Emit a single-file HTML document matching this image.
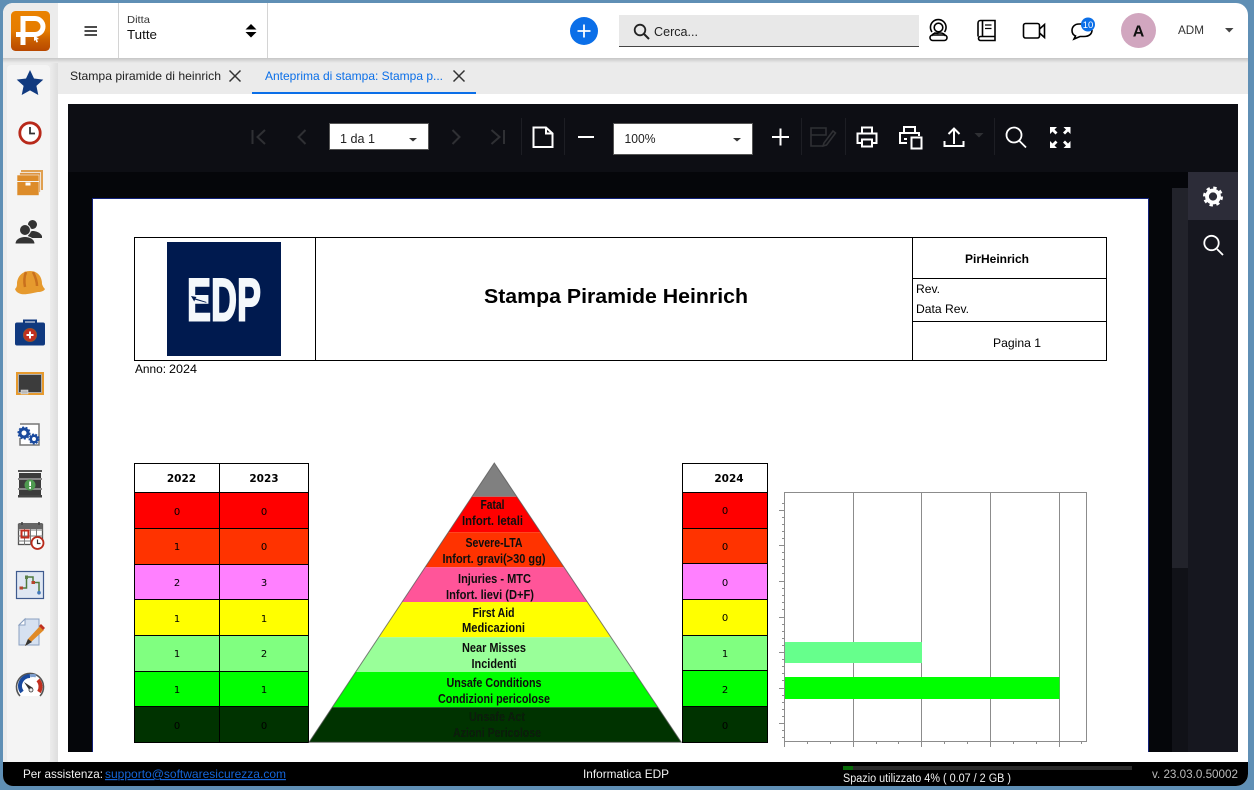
<!DOCTYPE html>
<html lang="it"><head><meta charset="utf-8"><title>Anteprima di stampa</title>
<style>
html,body{margin:0;padding:0;width:1254px;height:790px;overflow:hidden;background:#5f8fb5}
svg{display:block}
text{font-family:"Liberation Sans",sans-serif}
.dj{font-family:"DejaVu Sans",sans-serif}
.pt{font-family:"Liberation Sans",sans-serif;font-weight:700;font-size:12.500px;filter:url(#soft)}
</style></head><body>
<svg width="1254" height="790" viewBox="0 0 1254 790" xmlns="http://www.w3.org/2000/svg">
<defs>
<linearGradient id="lg" x1="0" y1="0" x2="0" y2="1"><stop offset="0" stop-color="#ea8200"/><stop offset=".5" stop-color="#e57c00"/><stop offset=".7" stop-color="#cc6200"/><stop offset="1" stop-color="#b84800"/></linearGradient>
<linearGradient id="sh" x1="0" y1="0" x2="0" y2="1"><stop offset="0" stop-color="#000" stop-opacity=".16"/><stop offset="1" stop-color="#000" stop-opacity="0"/></linearGradient>
<linearGradient id="gut" x1="0" y1="0" x2="1" y2="0"><stop offset="0" stop-color="#ececec"/><stop offset="1" stop-color="#dedede"/></linearGradient>
<filter id="soft"><feGaussianBlur stdDeviation=".28"/></filter>
<clipPath id="win"><path d="M13 3H1236a12 12 0 0 1 12 12V774a12 12 0 0 1-12 12H13a10 10 0 0 1-10-10V13a10 10 0 0 1 10-10z"/></clipPath>
</defs>
<rect width="1254" height="790" fill="#5f8fb5"/>
<g clip-path="url(#win)">
<rect x="3" y="3" width="1245" height="783" fill="#fff"/>
<!-- left column -->
<rect x="3" y="3" width="55" height="760" fill="#ececec"/>
<rect x="50" y="63" width="8" height="700" fill="url(#gut)"/>
<rect x="7" y="65" width="43" height="698" rx="4" fill="#f4f4f4"/>
<rect x="3" y="58" width="55" height="5" fill="url(#sh)"/>
<!-- logo -->
<rect x="11" y="11" width="39" height="40" rx="4.500" fill="url(#lg)"/>
<path d="M23 45V18.500H35a8 8 0 0 1 0 16H16" fill="none" stroke="#fff" stroke-width="5"/>
<path d="M34 35l5 4-2 .5 1 2.500-1.500.5-1-2.500-1.500 1z" fill="#fff"/>
<!-- top bar -->
<path d="M84.500 27h12.500M84.500 31h12.500M84.500 35h12.500" stroke="#111" stroke-width="1.600"/>
<rect x="118" y="3" width="1" height="55" fill="#d4d4d4"/><rect x="267" y="3" width="1" height="55" fill="#d4d4d4"/>
<text x="127" y="23" font-size="10.500" fill="#333" textLength="23" lengthAdjust="spacingAndGlyphs">Ditta</text>
<text x="127" y="39" font-size="12.500" fill="#111" textLength="30" lengthAdjust="spacingAndGlyphs">Tutte</text>
<path d="M251 24l-5.500 5.500h11zM251 37.500l-5.500-5.500h11z" fill="#000"/>
<circle cx="584" cy="31" r="14" fill="#0b6fe8"/><path d="M577.500 31h13M584 24.500v13" stroke="#fff" stroke-width="1.800"/>
<rect x="619" y="15" width="300" height="32" fill="#e8e8e8"/><rect x="619" y="46" width="300" height="1" fill="#444"/>
<circle cx="640" cy="30" r="5.300" fill="none" stroke="#222" stroke-width="1.800"/><path d="M644 34l5 5" stroke="#222" stroke-width="2"/>
<text x="654" y="36" font-size="12.500" fill="#222" textLength="44" lengthAdjust="spacingAndGlyphs">Cerca...</text>
<!-- support -->
<g fill="none" stroke="#000" stroke-width="1.600">
<path d="M932 32a7.800 7.800 0 1 1 12.500 0"/><circle cx="938.500" cy="27.500" r="4.300"/><path d="M934 33l4.500.5"/><rect x="930" y="35" width="17" height="5.500" rx="2.700"/>
<path d="M931.500 36c1-2 3-3 5-3h4c2 0 4 1 5 3"/>
<!-- book -->
<path d="M978 36.500V23a2.500 2.500 0 0 1 2.500-2.500H995V36.500H980.500a2 2 0 0 0 0 4H995V36.500M982.500 20.500V36.500"/><path d="M985 25h6.500M985 28.500h6.500" stroke-width="1.300"/>
<!-- video -->
<rect x="1023.500" y="23.500" width="16" height="14.500" rx="2"/><path d="M1039.500 29l5-4.500v13l-5-4.500"/>
<!-- chat -->
<path d="M1083 24h-4c-4.500 0-7 3-7 6.500 0 2.500 1.300 4.500 3.500 5.500l-1.500 3 6-2.500h4c5 0 8-2.500 8-6.500"/>
</g>
<circle cx="1088" cy="24.500" r="7" fill="#0b6fe8"/><text x="1088" y="28" font-size="9.500" fill="#fff" text-anchor="middle">10</text>
<circle cx="1138.500" cy="30.500" r="17.500" fill="#d1a6bf"/><text x="1138.500" y="36.500" font-size="16" font-weight="700" fill="#111" text-anchor="middle">A</text>
<text x="1178" y="34" font-size="12" fill="#333" textLength="26" lengthAdjust="spacingAndGlyphs">ADM</text>
<path d="M1225 28h8.500l-4.250 4.500z" fill="#444"/>
<!-- tabs -->
<rect x="58" y="58" width="1190" height="36" fill="#ebebeb"/>
<rect x="58" y="58" width="1190" height="5" fill="url(#sh)"/>
<text x="70" y="80" font-size="12" fill="#222" textLength="151" lengthAdjust="spacingAndGlyphs">Stampa piramide di heinrich</text>
<path d="M229.500 70.500l11 11M240.500 70.500l-11 11" stroke="#333" stroke-width="1.500"/>
<text x="265" y="80" font-size="12" fill="#0b6fe8" textLength="178" lengthAdjust="spacingAndGlyphs">Anteprima di stampa: Stampa p...</text>
<path d="M453.500 70.500l11 11M464.500 70.500l-11 11" stroke="#333" stroke-width="1.500"/>
<rect x="252" y="92" width="224" height="2" fill="#0b6fe8"/>
<!-- viewer -->
<rect x="68" y="104" width="1170" height="648" fill="#05060a"/>
<rect x="68" y="104" width="1170" height="68" fill="#0d0e14"/>
<!-- right panel -->
<rect x="1172" y="188" width="16" height="564" fill="#111218"/>
<rect x="1172" y="188" width="16" height="380" fill="#22232b"/>
<rect x="1188" y="172" width="50" height="580" fill="#16171f"/>
<rect x="1188" y="172" width="50" height="48" fill="#2c2c38"/>
<g fill="none" stroke="#2f3034" stroke-width="2">
<path d="M252.500 130v14M265 130l-7.500 7 7.500 7M305.500 130l-7 7 7 7M452.500 130l7 7-7 7M491.500 130l8 7-8 7M504 130v14"/>
<path d="M811 128h15v7h-15zM811 140v6h13M811 135v5M824 143l9-12 2.500 2-9 12-3.500 1z" stroke-width="1.600"/>
</g>
<path d="M974.500 133h9l-4.500 4.500z" fill="#2f3034"/>
<g fill="#1d1e24"><rect x="521" y="118" width="1" height="37"/><rect x="564" y="118" width="1" height="37"/><rect x="801" y="118" width="1" height="37"/><rect x="845" y="118" width="1" height="37"/><rect x="994" y="118" width="1" height="37"/></g>
<rect x="329.500" y="123.500" width="99" height="26" fill="#fff" stroke="#555"/>
<text x="340" y="143" font-size="12.500" fill="#222" textLength="35" lengthAdjust="spacingAndGlyphs">1 da 1</text>
<path d="M409 138h8l-4 3.500z" fill="#333"/>
<rect x="613.500" y="123.500" width="139" height="31" fill="#fff" stroke="#555"/>
<text x="624.500" y="143" font-size="12.500" fill="#222" textLength="31" lengthAdjust="spacingAndGlyphs">100%</text>
<path d="M733 138h8l-4 3.500z" fill="#333"/>
<g fill="none" stroke="#fff" stroke-width="2">
<path d="M533.500 127.500h12.500l6.500 6v13.500h-19zM546 127.500v6h6.500"/>
<path d="M578 137h16"/>
<path d="M772 137h17M780.500 128.500v17"/>
<!-- print -->
<path d="M862 134v-6.500h10v6.500M862 143h-4.500v-9.500h19v9.500H872M862 139.500h10v7h-10z"/>
<!-- print 2 -->
<path d="M904 133v-6h11v6M907 143h-7v-10h19v3M907 139h-3"/><rect x="911.500" y="137.500" width="10" height="11"/>
<!-- upload -->
<path d="M954 144v-15M948.500 134l5.500-5.500 5.500 5.500M944.500 141v5h19v-5"/>
</g>
<g fill="none" stroke="#fff" stroke-width="1.800">
<!-- search -->
<circle cx="1014" cy="135" r="7.500"/><path d="M1019.500 141l6.500 6.500"/>
<!-- right search -->
<circle cx="1211.500" cy="243" r="7.200"/><path d="M1217 249l6 6"/>
</g>
<!-- fullscreen -->
<g fill="#fff">
<path d="M1050 127h7l-2.500 2.500 3 3-2 2-3-3-2.500 2.500zM1070.500 127v7l-2.500-2.500-3 3-2-2 3-3-2.500-2.500zM1050 148v-7l2.500 2.500 3-3 2 2-3 3 2.500 2.500zM1070.500 148h-7l2.500-2.500-3-3 2-2 3 3 2.500-2.500z"/>
</g>
<!-- gear -->
<circle cx="1213" cy="196.500" r="6" fill="none" stroke="#fff" stroke-width="3.800"/>
<circle cx="1213" cy="196.500" r="8.800" fill="none" stroke="#fff" stroke-width="2.400" stroke-dasharray="3.400 3.510"/>
<!-- page -->
<rect x="92" y="198" width="1057" height="554" fill="#fff"/>
<path d="M92.500 752V198.500H1148.500V752" fill="none" stroke="#12217a"/>
<!-- header table -->
<g fill="none" stroke="#000">
<rect x="134.500" y="237.500" width="972" height="123"/>
<path d="M315.500 237v124M912.500 237v124M912.500 278.500h194M912.500 321.500h194"/>
</g>
<rect x="167" y="242" width="114" height="114" fill="#001a4f"/>
<text x="187" y="320.500" font-size="60" font-weight="700" fill="#f4f8fb" stroke="#f4f8fb" stroke-width="2" textLength="74" lengthAdjust="spacingAndGlyphs">EDP</text>
<path d="M191 296l5.500 1-1 1.500 11 3.500-.3.800-11.200-3.200-.8 1.900z" fill="#001a4f"/>
<text x="484" y="303" font-size="20" font-weight="700" fill="#000" textLength="264" lengthAdjust="spacingAndGlyphs">Stampa Piramide Heinrich</text>
<text x="965" y="263" font-size="12" font-weight="700" fill="#000" textLength="64" lengthAdjust="spacingAndGlyphs">PirHeinrich</text>
<text x="916" y="293" font-size="12" fill="#000" textLength="24" lengthAdjust="spacingAndGlyphs">Rev.</text>
<text x="916" y="313" font-size="12" fill="#000" textLength="53" lengthAdjust="spacingAndGlyphs">Data Rev.</text>
<text x="993" y="347" font-size="12" fill="#000" textLength="48" lengthAdjust="spacingAndGlyphs">Pagina 1</text>
<text x="135" y="373" font-size="12" fill="#000" textLength="31" lengthAdjust="spacingAndGlyphs">Anno:</text>
<text x="169" y="373" font-size="12" fill="#000" textLength="28" lengthAdjust="spacingAndGlyphs">2024</text>
<!-- left table -->
<g>
<rect x="134" y="492" width="175" height="36" fill="#f00"/>
<rect x="134" y="528" width="175" height="36" fill="#f30"/>
<rect x="134" y="564" width="175" height="35" fill="#ff80ff"/>
<rect x="134" y="599" width="175" height="36" fill="#ff0"/>
<rect x="134" y="635" width="175" height="36" fill="#80ff80"/>
<rect x="134" y="671" width="175" height="35" fill="#0f0"/>
<rect x="134" y="706" width="175" height="36" fill="#030"/>
<path d="M134.500 463.500H308.500V742.500H134.500zM219.500 463v280M134 492.500h175M134 528.500h175M134 564.500h175M134 599.500h175M134 635.500h175M134 671.500h175M134 706.500h175" fill="none" stroke="#000"/>
</g>
<g class="dj" font-size="10" fill="#000" text-anchor="middle">
<text x="181.500" y="482" font-weight="700" class="dj" font-size="10.500">2022</text><text x="264" y="482" font-weight="700" class="dj" font-size="10.500">2023</text>
<text x="177" y="515" class="dj">0</text><text x="264" y="515" class="dj">0</text>
<text x="177" y="550" class="dj">1</text><text x="264" y="550" class="dj">0</text>
<text x="177" y="586" class="dj">2</text><text x="264" y="586" class="dj">3</text>
<text x="177" y="622" class="dj">1</text><text x="264" y="622" class="dj">1</text>
<text x="177" y="657" class="dj">1</text><text x="264" y="657" class="dj">2</text>
<text x="177" y="693" class="dj">1</text><text x="264" y="693" class="dj">1</text>
<text x="177" y="729" class="dj">0</text><text x="264" y="729" class="dj">0</text>
</g>
<!-- pyramid -->
<path d="M494.300 463L516.900 496.700H471.900z" fill="#808080"/>
<path d="M471.900 496.700H516.900L540.700 532.300H448.300z" fill="#f00"/>
<path d="M448.300 532.300H540.700L564.100 567.300H425.100z" fill="#f30"/>
<path d="M425.100 567.300H564.100L587.400 602H402.100z" fill="#ff5599"/>
<path d="M402.100 602H587.400L611 637.300H378.700z" fill="#ff0"/>
<path d="M378.700 637.300H611L634.200 672H355.600z" fill="#99ff99"/>
<path d="M355.600 672H634.200L657.900 707.300H332.200z" fill="#0f0"/>
<path d="M332.200 707.300H657.900L681.300 742.300H309z" fill="#030"/>
<path d="M309 742.300L494.300 463 681.300 742.300z" fill="none" stroke="#555" stroke-width="1" opacity=".75"/>
<g fill="#111" text-anchor="middle">
<text class="pt" x="492.500" y="509" textLength="24" lengthAdjust="spacingAndGlyphs">Fatal</text>
<text class="pt" x="492.500" y="525" textLength="61" lengthAdjust="spacingAndGlyphs">Infort. letali</text>
<text class="pt" x="494" y="547" textLength="57" lengthAdjust="spacingAndGlyphs">Severe-LTA</text>
<text class="pt" x="494" y="563" textLength="103" lengthAdjust="spacingAndGlyphs">Infort. gravi(&gt;30 gg)</text>
<text class="pt" x="494.500" y="583" textLength="73" lengthAdjust="spacingAndGlyphs">Injuries - MTC</text>
<text class="pt" x="490" y="599" textLength="88" lengthAdjust="spacingAndGlyphs">Infort. lievi (D+F)</text>
<text class="pt" x="493.500" y="617" textLength="42" lengthAdjust="spacingAndGlyphs">First Aid</text>
<text class="pt" x="493.500" y="632" textLength="63" lengthAdjust="spacingAndGlyphs">Medicazioni</text>
<text class="pt" x="494" y="652" textLength="64" lengthAdjust="spacingAndGlyphs">Near Misses</text>
<text class="pt" x="494" y="668" textLength="45" lengthAdjust="spacingAndGlyphs">Incidenti</text>
<text class="pt" x="494" y="687" textLength="95" lengthAdjust="spacingAndGlyphs">Unsafe Conditions</text>
<text class="pt" x="494" y="703" textLength="112" lengthAdjust="spacingAndGlyphs">Condizioni pericolose</text>
<text class="pt" x="497" y="721" textLength="56" lengthAdjust="spacingAndGlyphs" fill="#0a1a0a">Unsafe Act</text>
<text class="pt" x="497" y="737" textLength="88" lengthAdjust="spacingAndGlyphs" fill="#0a1a0a">Azioni Pericolose</text>
</g>
<!-- right table -->
<rect x="682" y="492" width="86" height="36" fill="#f00"/>
<rect x="682" y="528" width="86" height="36" fill="#f30"/>
<rect x="682" y="564" width="86" height="35" fill="#ff80ff"/>
<rect x="682" y="599" width="86" height="36" fill="#ff0"/>
<rect x="682" y="635" width="86" height="35" fill="#80ff80"/>
<rect x="682" y="670" width="86" height="36" fill="#0f0"/>
<rect x="682" y="706" width="86" height="36" fill="#030"/>
<path d="M682.500 463.500H767.500V742.500H682.500zM682 492.500h86M682 528.500h86M682 563.500h86M682 599.500h86M682 635.500h86M682 670.500h86M682 706.500h86" fill="none" stroke="#000"/>
<g font-size="10" fill="#000" text-anchor="middle">
<text x="729" y="482" font-weight="700" class="dj" font-size="10.500">2024</text>
<text x="725" y="514" class="dj">0</text><text x="725" y="550" class="dj">0</text><text x="725" y="586" class="dj">0</text><text x="725" y="621" class="dj">0</text><text x="725" y="657" class="dj">1</text><text x="725" y="693" class="dj">2</text><text x="725" y="729" class="dj">0</text>
</g>
<!-- chart -->
<g fill="none" stroke="#8c8c8c">
<rect x="784.500" y="492.500" width="302" height="249"/>
<path d="M853.500 492v250M921.500 492v250M990.500 492v250M1059.500 492v250"/>
<path d="M779 510.500h6M779 545.500h6M779 581.500h6M779 617.500h6M779 652.500h6M779 688.500h6M779 723.500h6"/>
<path d="M782 503.500h3M782 517.500h3M782 524.500h3M782 531.500h3M782 538.500h3M782 552.500h3M782 559.500h3M782 566.500h3M782 573.500h3M782 588.500h3M782 595.500h3M782 602.500h3M782 609.500h3M782 624.500h3M782 631.500h3M782 638.500h3M782 645.500h3M782 659.500h3M782 666.500h3M782 673.500h3M782 680.500h3M782 695.500h3M782 702.500h3M782 709.500h3M782 716.500h3M782 730.500h3M782 737.500h3"/>
<path d="M784.500 741v6M853.500 741v6M921.500 741v6M990.500 741v6M1059.500 741v6"/>
<path d="M807.500 741v3M830.500 741v3M876.500 741v3M898.500 741v3M944.500 741v3M967.500 741v3M1013.500 741v3M1036.500 741v3M1081.500 741v3"/>
</g>
<rect x="785" y="642" width="137" height="21" fill="#66ff8c"/>
<rect x="785" y="677" width="274.500" height="22" fill="#0f0"/>
<!-- side icons -->
<path d="M30 70l4 8.500 9.300 1.100-6.900 6.300 1.900 9.100-8.300-4.600-8.300 4.600 1.900-9.100-6.900-6.300 9.300-1.100z" fill="#10397f"/>
<circle cx="30" cy="133" r="10.200" fill="#fff" stroke="#b8291a" stroke-width="2.800"/><path d="M30 127v6.500h5" fill="none" stroke="#333" stroke-width="1.800"/>
<!-- boxes -->
<rect x="21" y="170" width="22" height="20" fill="#e0a050"/><rect x="19.500" y="172.500" width="21" height="20" fill="#dd9440" stroke="#f4f4f4" stroke-width=".8"/>
<rect x="17" y="175" width="22" height="20.500" fill="#dd8c2a" stroke="#f4f4f4" stroke-width=".6"/><rect x="17" y="181" width="22" height="1" fill="#f4f4f4"/><rect x="25.500" y="182.500" width="5" height="3" fill="#fff"/>
<!-- people -->
<g fill="#333"><circle cx="32.500" cy="224.500" r="4.500"/><path d="M28 236c1-4 3-5 5-5s7 1 9 5v2H30z"/><circle cx="25" cy="230" r="5.500" stroke="#f4f4f4"/><path d="M15 244c0-5 5-7.500 10-7.500s10 2.500 10 7.500z" stroke="#f4f4f4"/></g>
<!-- helmet -->
<path d="M15 289c1-1 2-2 2-5 0-7 5-13 13-13s12 6 12 13c1 3 2 4 3 5-1 2-4 3-7 3-6 1-12 3-17 2-3-1-5-2-6-5z" fill="#e69a2e"/>
<path d="M26 272c-2 5-2 10-1 15M33 272c2 4 4 9 4 14" stroke="#c9701d" stroke-width="2.500" fill="none"/>
<!-- medkit -->
<path d="M24 323v-2.500h12v2.500" fill="none" stroke="#10397f" stroke-width="2"/><rect x="15" y="322.500" width="30" height="23" rx="2" fill="#10397f"/><circle cx="30" cy="335" r="6.500" fill="#c22f1f" stroke="#92502a"/><path d="M30 331.500v7M26.500 335h7" stroke="#fff" stroke-width="2"/>
<!-- board -->
<rect x="17" y="373" width="26" height="21" fill="#3c3c3c" stroke="#e69a2e" stroke-width="2"/><rect x="18.500" y="374.500" width="23" height="18" fill="none" stroke="#ddd" stroke-width=".7"/><rect x="21" y="390" width="7" height="4" fill="#bbb" stroke="#eee" stroke-width=".5"/>
<!-- gears -->
<path d="M20 424h19v21H20v-7" fill="#fff" stroke="#777" stroke-width="1.500"/>
<circle cx="24" cy="433" r="4" fill="none" stroke="#1a4a9e" stroke-width="3"/><circle cx="24" cy="433" r="5.800" fill="none" stroke="#1a4a9e" stroke-width="1.500" stroke-dasharray="2 1.600"/>
<circle cx="34" cy="439" r="3.200" fill="none" stroke="#1a4a9e" stroke-width="2.500"/><circle cx="34" cy="439" r="4.800" fill="none" stroke="#1a4a9e" stroke-width="1.300" stroke-dasharray="2 1.400"/>
<!-- barrel -->
<path d="M19 472l3-2h4v2z" fill="#333"/><rect x="19" y="473" width="22" height="22" fill="#3c3c3c"/><rect x="18" y="470" width="24" height="2" fill="#555"/><rect x="18" y="478" width="24" height="2" fill="#888"/><rect x="18" y="488" width="24" height="2" fill="#888"/><rect x="18" y="495" width="24" height="2.500" fill="#444"/>
<circle cx="30" cy="485" r="5.500" fill="#4f9a50"/><rect x="29.200" y="481.500" width="1.800" height="4.500" fill="#fff"/><rect x="29.200" y="487" width="1.800" height="1.800" fill="#fff"/>
<!-- calendar -->
<rect x="18.500" y="524.500" width="24" height="20" fill="#fff" stroke="#555" stroke-width="1.300"/>
<path d="M18 530h25M18 536h25M18 541h25M24.500 525v20M30.500 525v20M36.500 525v20" stroke="#777" stroke-width="1"/><rect x="18.500" y="523" width="24" height="6" fill="#666"/><path d="M22 522v3M39 522v3" stroke="#444" stroke-width="1.600"/>
<rect x="21.500" y="530.500" width="7" height="7" fill="none" stroke="#c32c1c" stroke-width="2"/>
<circle cx="37.500" cy="543" r="6" fill="#fff" stroke="#b8291a" stroke-width="1.800"/><path d="M37.500 539.500v4h3" fill="none" stroke="#333" stroke-width="1.200"/>
<!-- route -->
<rect x="16.500" y="571.500" width="27" height="27" fill="#dfe7f3" stroke="#3e5a8e" stroke-width="1.200"/>
<path d="M21 588h5.500v-11h6.500v5.500h6v10" fill="none" stroke="#4f7a3c" stroke-width="1.500"/><rect x="19.500" y="586.500" width="3.500" height="3" fill="#b5442c"/><rect x="25" y="575.500" width="3" height="3.500" fill="#5b7f4a"/><rect x="31.500" y="581" width="3.500" height="3" fill="#b5442c"/><circle cx="39" cy="592.700" r="1.800" fill="#4278b9"/>
<!-- doc pencil -->
<path d="M19 625l6-6h14v26H19z" fill="#d6e1f0" stroke="#8aa0c0"/><path d="M19 625h6v-6z" fill="#fff" stroke="#8aa0c0"/>
<path d="M25 646l3-7 12-13 4 4-13 12z" fill="#e08a26"/><path d="M25 646l3-7 4 3z" fill="#333"/><path d="M39 626l2-2 4 4-2 2z" fill="#c03020"/>
<!-- gauge -->
<path d="M20 696a13.500 13.500 0 1 1 20 0" fill="#fff" stroke="#555" stroke-width="1.600"/>
<path d="M22 692a10 10 0 0 1 8-16" fill="none" stroke="#1a4a9e" stroke-width="4"/><path d="M30 676a10 10 0 0 1 6 0" fill="none" stroke="#7fa0d0" stroke-width="3"/><path d="M38 680a10 10 0 0 1 1 12" fill="none" stroke="#c22f1f" stroke-width="4"/>
<path d="M24 682l9 6-3 3z" fill="#333"/><circle cx="31" cy="690" r="2" fill="#eee" stroke="#333" stroke-width=".8"/>
<!-- footer -->
<rect x="3" y="762" width="1245" height="24" fill="#000"/>
<text x="23" y="778" font-size="12" fill="#f2f2f2" textLength="80" lengthAdjust="spacingAndGlyphs">Per assistenza:</text>
<text x="105" y="778" font-size="12" fill="#1565d8" text-decoration="underline" textLength="181" lengthAdjust="spacingAndGlyphs">supporto@softwaresicurezza.com</text>
<text x="583" y="778" font-size="12" fill="#f2f2f2" textLength="86" lengthAdjust="spacingAndGlyphs">Informatica EDP</text>
<rect x="843" y="766" width="289" height="4" fill="#2a2a2a"/><rect x="843" y="766" width="10" height="4" fill="#086b08"/>
<text x="843" y="782" font-size="11.500" fill="#f2f2f2" textLength="168" lengthAdjust="spacingAndGlyphs">Spazio utilizzato 4% ( 0.07 / 2 GB )</text>
<text x="1152" y="778" font-size="12" fill="#bcbcbc" textLength="86" lengthAdjust="spacingAndGlyphs">v. 23.03.0.50002</text>
</g>
</svg>
</body></html>
